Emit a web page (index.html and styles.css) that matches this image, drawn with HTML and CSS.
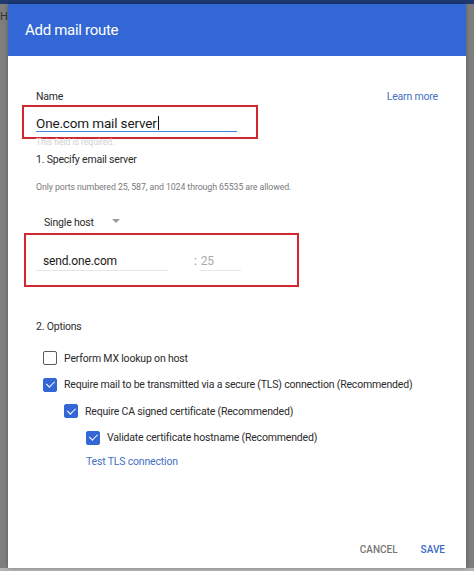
FILE: index.html
```html
<!DOCTYPE html>
<html lang="en">
<head>
    <meta charset="UTF-8">
    <meta name="viewport" content="width=device-width, initial-scale=1.0">
    <title>Add mail route</title>
    <link rel="stylesheet" href="styles.css">
</head>
<body>
    <div class="appbar"></div>
    <div class="page-behind">Ho</div>

    <div class="dialog">
        <div class="dialog-header">Add mail route</div>

        <div class="dialog-body">
            <div class="name-row">
                <span class="label">Name</span>
                <a class="link" href="#">Learn more</a>
            </div>

            <div class="mark mark-name">
                <div class="input input-name">One.com mail server<span class="caret"></span></div>
            </div>
            <div class="helper">This field is required.</div>

            <div class="section-title">1. Specify email server</div>
            <div class="hint">Only ports numbered 25, 587, and 1024 through 65535 are allowed.</div>

            <div class="select">
                <span>Single host</span>
                <span class="select-arrow"></span>
            </div>

            <div class="mark mark-host">
                <div class="host-row">
                    <div class="input input-host">send.one.com</div>
                    <span class="colon">:</span>
                    <div class="input input-port">25</div>
                </div>
            </div>

            <div class="section-title options-title">2. Options</div>

            <div class="options">
                <label class="option">
                    <span class="checkbox"></span>
                    Perform MX lookup on host
                </label>
                <label class="option">
                    <span class="checkbox checked"></span>
                    Require mail to be transmitted via a secure (TLS) connection (Recommended)
                </label>
                <label class="option level-2">
                    <span class="checkbox checked"></span>
                    Require CA signed certificate (Recommended)
                </label>
                <label class="option level-3">
                    <span class="checkbox checked"></span>
                    Validate certificate hostname (Recommended)
                </label>
            </div>

            <a class="link test-link" href="#">Test TLS connection</a>
        </div>

        <div class="dialog-footer">
            <button class="btn btn-cancel">CANCEL</button>
            <button class="btn btn-save">SAVE</button>
        </div>
    </div>

    <div class="bottom-strip"></div>
</body>
</html>
```

FILE: styles.css
```css
body {
    margin: 0;
    background: #7e7e7e;
    font-family: Roboto, 'Liberation Sans', Arial, sans-serif;
    color: #2b2b2b;
    height: 571px;
    overflow: hidden;
    position: relative;
}
.appbar {
    height: 4px;
    background: #1d3a72;
}
.page-behind {
    position: absolute;
    left: 0;
    top: 10px;
    font-size: 11px;
    color: #333;
}
.dialog {
    position: relative;
    margin: 0 8px;
    height: 564px;
    background: #fff;
    display: flex;
    flex-direction: column;
    box-shadow: 0 0 4px rgba(0,0,0,0.3);
}
.dialog-header {
    height: 52px;
    background: #3367d6;
    color: #fff;
    font-size: 15px;
    line-height: 52px;
    padding-left: 17px;
    letter-spacing: -0.3px;
}
.dialog-body {
    padding: 33px 28px 0 28px;
    font-size: 10.5px;
    letter-spacing: -0.18px;
}
.name-row {
    display: flex;
    justify-content: space-between;
    line-height: 16px;
    height: 16px;
}
.link {
    color: #4470c4;
    text-decoration: none;
}
.mark {
    border: 2px solid #d3262e;
    box-sizing: border-box;
}
.mark-name {
    margin-left: -14px;
    width: 236px;
    height: 34px;
    padding: 8px 0 0 12px;
}
.input {
    box-sizing: border-box;
    color: #1a1a1a;
}
.input-name {
    width: 201px;
    height: 17px;
    line-height: 17px;
    font-size: 13.5px;
    letter-spacing: -0.15px;
    border-bottom: 1.5px solid #4a86e0;
}
.caret {
    display: inline-block;
    width: 1px;
    height: 14px;
    margin-left: 1px;
    background: #111;
    vertical-align: -2px;
}
.helper {
    margin-top: -3px;
    line-height: 12px;
    font-size: 8.5px;
    letter-spacing: 0;
    color: #d0d0d0;
}
.section-title {
    margin-top: 4px;
    line-height: 16px;
    font-size: 10.5px;
    letter-spacing: -0.2px;
}
.hint {
    margin-top: 13px;
    line-height: 12px;
    font-size: 8.8px;
    letter-spacing: -0.1px;
    color: #7a7a7a;
}
.select {
    margin-top: 22px;
    padding-left: 8px;
    height: 16px;
    line-height: 16px;
    display: flex;
    align-items: center;
}
.select-arrow {
    margin-left: 18px;
    margin-top: -5px;
    width: 0;
    height: 0;
    border-left: 4px solid transparent;
    border-right: 4px solid transparent;
    border-top: 4px solid #999;
}
.mark-host {
    margin-top: 2px;
    margin-left: -12px;
    width: 275px;
    height: 54px;
    padding: 17px 0 0 10px;
}
.host-row {
    display: flex;
    align-items: flex-end;
}
.input-host {
    width: 132px;
    height: 19px;
    line-height: 18px;
    font-size: 12px;
    letter-spacing: -0.15px;
    padding-left: 7px;
    border-bottom: 1px solid #e6e6e6;
}
.colon {
    margin-left: 26px;
    color: #999;
    font-size: 12px;
    line-height: 18px;
    height: 19px;
}
.input-port {
    margin-left: 3px;
    width: 41px;
    height: 19px;
    line-height: 18px;
    font-size: 12px;
    padding-left: 1px;
    color: #aaa;
    border-bottom: 1px solid #e6e6e6;
}
.options-title {
    margin-top: 32px;
}
.options {
    margin-top: 13px;
    display: flex;
    flex-direction: column;
    gap: 6.6px;
}
.option {
    display: flex;
    align-items: center;
    height: 20px;
    gap: 7px;
    padding-left: 7px;
    white-space: nowrap;
}
.level-2 {
    padding-left: 28px;
}
.level-3 {
    padding-left: 50px;
}
.checkbox {
    width: 14px;
    height: 14px;
    box-sizing: border-box;
    border: 1.5px solid #5a5a5a;
    border-radius: 2px;
    position: relative;
    flex-shrink: 0;
}
.checkbox.checked {
    background: #3367d6;
    border-color: #3367d6;
}
.checkbox.checked::after {
    content: '';
    position: absolute;
    left: 3.5px;
    top: 0.5px;
    width: 3.5px;
    height: 7px;
    border: solid #fff;
    border-width: 0 1.6px 1.6px 0;
    transform: rotate(45deg);
}
.test-link {
    display: block;
    margin-top: 6.5px;
    margin-left: 50px;
    line-height: 16px;
}
.dialog-footer {
    margin-top: auto;
    padding: 0 21px 10px 0;
    display: flex;
    justify-content: flex-end;
    gap: 23px;
}
.btn {
    border: none;
    background: none;
    padding: 0;
    font-family: inherit;
    font-size: 10px;
    font-weight: 500;
    line-height: 16px;
    letter-spacing: 0;
}
.btn-cancel {
    color: #777;
}
.btn-save {
    color: #3c6bc7;
}
.bottom-strip {
    height: 3px;
    background: #b4b4b4;
}
```
